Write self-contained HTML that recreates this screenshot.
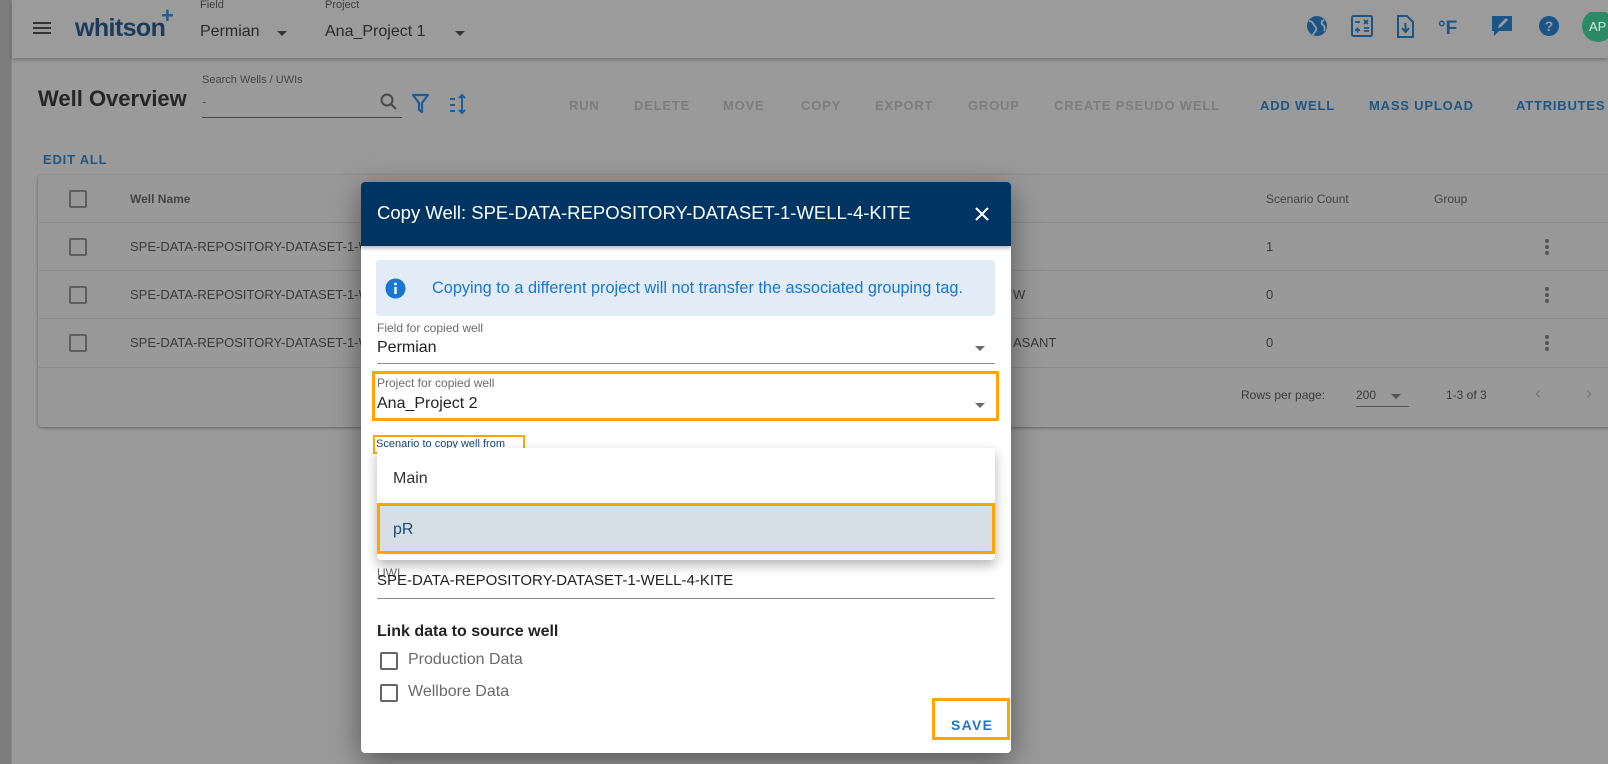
<!DOCTYPE html>
<html><head><meta charset="utf-8">
<style>
*{box-sizing:border-box;margin:0;padding:0}
body{width:1608px;height:764px;overflow:hidden;background:#9a9a9a;font-family:"Liberation Sans",Arial,sans-serif;position:relative;color:#1a1a1a}
.a{position:absolute;white-space:nowrap}
.strip{left:0;top:0;width:12px;height:764px;background:#7c7c7c;border-right:1px solid #888}
.top{left:12px;top:0;width:1596px;height:58px;background:#9b9b9b;box-shadow:0 2px 4px rgba(0,0,0,.25)}
.btn{font-size:13px;font-weight:bold;letter-spacing:0.8px;top:98px}
.dis{color:#7d7d7d}
.en{color:#1f5784}
.card{left:38px;top:175px;width:1580px;height:252px;background:#999;border-radius:4px;box-shadow:0 1px 3px rgba(0,0,0,.35)}
.row{position:absolute;left:0;width:100%;border-bottom:1px solid #8a8a8a}
.cb{position:absolute;width:18px;height:18px;border:2px solid #5e5e5e;border-radius:2px}
.cell{position:absolute;font-size:13px;color:#3a3a3a}
.kb{position:absolute;width:4px}
.kb i{display:block;width:4px;height:4px;border-radius:2px;background:#555;margin-bottom:2px}
.dlg{left:361px;top:182px;width:650px;height:571px;background:#fff;border-radius:4px;box-shadow:0 8px 30px rgba(0,0,0,.45);overflow:hidden}
.hd{position:absolute;left:0;top:0;width:650px;height:64px;background:#003462;box-shadow:0 2px 4px rgba(0,0,0,.3)}
.lbl{font-size:12px;color:#6b6b6b}
.val{font-size:16px;color:#222}
.line{height:1px;background:#8f8f8f}
.arr{width:0;height:0;border-left:5px solid transparent;border-right:5px solid transparent;border-top:5px solid #6a6a6a}
.org{border:3px solid #ffa500}
</style></head><body>
<div class="a strip"></div>
<div class="a top"></div>
<div class="a" style="left:33px;top:22px;width:18px;height:2px;background:#333"></div>
<div class="a" style="left:33px;top:27px;width:18px;height:2px;background:#333"></div>
<div class="a" style="left:33px;top:32px;width:18px;height:2px;background:#333"></div>
<div class="a" style="left:75px;top:14px;font-size:25px;font-weight:bold;letter-spacing:-0.6px;color:#1c3a5c">whitson</div>
<div class="a" style="left:161px;top:3px;font-size:22px;font-weight:bold;color:#1d5d95">+</div>
<div class="a lbl" style="left:200px;top:-1px;font-size:11px;color:#3e3e3e">Field</div>
<div class="a" style="left:200px;top:23px;font-size:16px;color:#2a2a2a">Permian</div>
<div class="a arr" style="left:277px;top:31px;border-top-color:#333"></div>
<div class="a lbl" style="left:325px;top:-1px;font-size:11px;color:#3e3e3e">Project</div>
<div class="a" style="left:325px;top:23px;font-size:16px;color:#2a2a2a">Ana_Project 1</div>
<div class="a arr" style="left:455px;top:31px;border-top-color:#333"></div>
<svg class="a" style="left:1300px;top:12px" width="310" height="32" viewBox="0 0 310 32">
 <g fill="#1a5585">
  <circle cx="17" cy="14" r="10"/>
  <path d="M9 9c3 0 4 2 5 4s3 2 2 5-3 3-3 5M24 8c-3 1-3 4-1 5s2 4 1 6" stroke="#9b9b9b" stroke-width="1.8" fill="none"/>
  <rect x="52" y="4" width="20" height="20" rx="1.5" fill="none" stroke="#1a5585" stroke-width="2"/>
  <path d="M55 10h5M64 8l4 4M68 8l-4 4M55 18h5M57.5 15.5v5M64 16h5M64 19h5" stroke="#1a5585" stroke-width="1.8"/>
  <path d="M98 4h9l6 6v15h-15z" fill="none" stroke="#1a5585" stroke-width="2"/>
  <path d="M105.5 11v8M102 16l3.5 4 3.5-4" stroke="#1a5585" stroke-width="2" fill="none"/>
  <text x="138" y="22" font-size="19" font-weight="bold" fill="#1a5585" font-family="Liberation Sans">°F</text>
  <path d="M192 4h20v15h-13l-5 5v-5h-2z"/>
  <path d="M198 16l1-3 7-7 2 2-7 7z" fill="#9b9b9b"/>
  <circle cx="249" cy="14" r="10"/>
  <text x="249" y="19" font-size="14" font-weight="bold" fill="#9b9b9b" text-anchor="middle" font-family="Liberation Sans">?</text>
 </g>
 <circle cx="298" cy="14" r="16" fill="#2b8a68"/>
 <text x="289" y="19" font-size="13" fill="#cfe3dc" font-family="Liberation Sans">AP</text>
</svg>
<div class="a" style="left:38px;top:86px;font-size:22px;font-weight:bold;color:#262626">Well Overview</div>
<div class="a" style="left:202px;top:74px;font-size:11px;color:#454545">Search Wells / UWIs</div>
<div class="a" style="left:202px;top:94px;font-size:13px;color:#555">-</div>
<div class="a" style="left:202px;top:117px;width:200px;height:1px;background:#4a4a4a"></div>
<svg class="a" style="left:379px;top:92px" width="90" height="24" viewBox="0 0 90 24">
 <circle cx="8" cy="8" r="5.5" fill="none" stroke="#4a4a4a" stroke-width="2"/><path d="M12 12l5 5" stroke="#4a4a4a" stroke-width="2"/>
 <path d="M34 3h15l-6 8v9l-3-2v-7z" fill="none" stroke="#1d5d95" stroke-width="2.2" stroke-linejoin="round"/>
 <path d="M71 7h5M71 13h5M71 19h5M83 3v18M80 6l3-3 3 3M80 18l3 3 3-3" stroke="#1d5d95" stroke-width="2" fill="none"/>
</svg>
<div class="a btn dis" style="left:569px">RUN</div>
<div class="a btn dis" style="left:634px">DELETE</div>
<div class="a btn dis" style="left:723px">MOVE</div>
<div class="a btn dis" style="left:801px">COPY</div>
<div class="a btn dis" style="left:875px">EXPORT</div>
<div class="a btn dis" style="left:968px">GROUP</div>
<div class="a btn dis" style="left:1054px">CREATE PSEUDO WELL</div>
<div class="a btn en" style="left:1260px">ADD WELL</div>
<div class="a btn en" style="left:1369px">MASS UPLOAD</div>
<div class="a btn en" style="left:1516px">ATTRIBUTES</div>
<div class="a btn en" style="left:43px;top:152px">EDIT ALL</div>
<div class="a card">
 <div class="row" style="top:0;height:48px"></div>
 <div class="row" style="top:48px;height:48px"></div>
 <div class="row" style="top:96px;height:48px"></div>
 <div class="row" style="top:144px;height:49px"></div>
 <div class="cb" style="left:31px;top:15px"></div>
 <div class="cb" style="left:31px;top:63px"></div>
 <div class="cb" style="left:31px;top:111px"></div>
 <div class="cb" style="left:31px;top:159px"></div>
 <div class="cell" style="left:92px;top:17px;font-size:12px;font-weight:bold;color:#444">Well Name</div>
 <div class="cell" style="left:92px;top:64px">SPE-DATA-REPOSITORY-DATASET-1-W</div>
 <div class="cell" style="left:92px;top:112px">SPE-DATA-REPOSITORY-DATASET-1-W</div>
 <div class="cell" style="left:92px;top:160px">SPE-DATA-REPOSITORY-DATASET-1-W</div>
 <div class="cell" style="left:975px;top:112px">W</div>
 <div class="cell" style="left:975px;top:160px">ASANT</div>
 <div class="cell" style="left:1228px;top:17px;font-size:12px;color:#444">Scenario Count</div>
 <div class="cell" style="left:1396px;top:17px;font-size:12px;color:#444">Group</div>
 <div class="cell" style="left:1228px;top:64px">1</div>
 <div class="cell" style="left:1228px;top:112px">0</div>
 <div class="cell" style="left:1228px;top:160px">0</div>
 <div class="kb" style="left:1507px;top:64px"><i></i><i></i><i></i></div>
 <div class="kb" style="left:1507px;top:112px"><i></i><i></i><i></i></div>
 <div class="kb" style="left:1507px;top:160px"><i></i><i></i><i></i></div>
 <div class="cell" style="left:1203px;top:213px;font-size:12px">Rows per page:</div>
 <div class="cell" style="left:1318px;top:213px;font-size:12px">200</div>
 <div class="arr" style="position:absolute;left:1353px;top:219px;border-top-color:#555"></div>
 <div style="position:absolute;left:1318px;top:231px;width:53px;height:1px;background:#555"></div>
 <div class="cell" style="left:1408px;top:213px;font-size:12px">1-3 of 3</div>
 <div class="cell" style="left:1497px;top:208px;font-size:18px;color:#7a7a7a">&lsaquo;</div>
 <div class="cell" style="left:1548px;top:208px;font-size:18px;color:#7a7a7a">&rsaquo;</div>
</div>
<div class="a dlg">
 <div class="hd"></div>
 <div class="a" style="left:16px;top:20px;font-size:18.5px;color:#fff">Copy Well: SPE-DATA-REPOSITORY-DATASET-1-WELL-4-KITE</div>
 <svg class="a" style="left:613px;top:24px" width="16" height="16"><path d="M2 2l12 12M14 2L2 14" stroke="#fff" stroke-width="2.2"/></svg>
 <div class="a" style="left:15px;top:78px;width:619px;height:56px;background:#e1ecf6;border-radius:4px"></div>
 <svg class="a" style="left:24px;top:96px" width="21" height="21"><circle cx="10.5" cy="10.5" r="10" fill="#1976d2"/><rect x="9.3" y="9" width="2.4" height="7" fill="#fff"/><circle cx="10.5" cy="6" r="1.4" fill="#fff"/></svg>
 <div class="a" style="left:71px;top:97px;font-size:16.3px;color:#1976d2">Copying to a different project will not transfer the associated grouping tag.</div>
 <div class="a lbl" style="left:16px;top:139px">Field for copied well</div>
 <div class="a val" style="left:16px;top:157px">Permian</div>
 <div class="a arr" style="left:614px;top:164px"></div>
 <div class="a line" style="left:16px;top:181px;width:618px"></div>
 <div class="a org" style="left:11px;top:189px;width:627px;height:50px"></div>
 <div class="a lbl" style="left:16px;top:194px">Project for copied well</div>
 <div class="a val" style="left:16px;top:213px">Ana_Project 2</div>
 <div class="a arr" style="left:614px;top:221px"></div>
 <div class="a org" style="left:12px;top:253px;width:152px;height:19px;border-width:2.5px"></div>
 <div class="a" style="left:15px;top:256px;font-size:11px;color:#1c4a7a">Scenario to copy well from</div>
 <div class="a lbl" style="left:16px;top:384px">UWI</div>
 <div class="a val" style="left:16px;top:390px;font-size:15px">SPE-DATA-REPOSITORY-DATASET-1-WELL-4-KITE</div>
 <div class="a line" style="left:16px;top:416px;width:618px"></div>
 <div class="a" style="left:16px;top:441px;font-size:16px;font-weight:bold;color:#222">Link data to source well</div>
 <div class="a cb" style="left:19px;top:470px;border-color:#666"></div>
 <div class="a" style="left:47px;top:469px;font-size:16px;color:#6a6a6a">Production Data</div>
 <div class="a cb" style="left:19px;top:502px;border-color:#666"></div>
 <div class="a" style="left:47px;top:501px;font-size:16px;color:#6a6a6a">Wellbore Data</div>
 <div class="a org" style="left:571px;top:516px;width:78px;height:42px"></div>
 <div class="a" style="left:590px;top:535px;font-size:14px;font-weight:bold;letter-spacing:1.3px;color:#1976d2">SAVE</div>
</div>
<div class="a" style="left:377px;top:448px;width:618px;height:112px;background:#fff;border-radius:4px;box-shadow:0 5px 12px rgba(0,0,0,.3)">
 <div class="a" style="left:16px;top:22px;font-size:16px;color:#333">Main</div>
 <div class="a org" style="left:0;top:55px;width:618px;height:51px;background:#d6dee6"></div>
 <div class="a" style="left:16px;top:73px;font-size:16px;color:#1c4a7a">pR</div>
</div>
</body></html>
